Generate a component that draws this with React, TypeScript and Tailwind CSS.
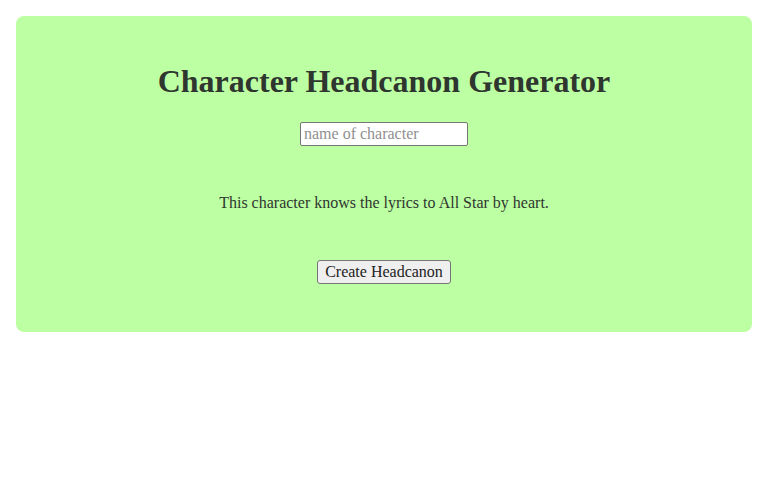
import React, { useState } from 'react';

const headcanons = [
  'This character knows the lyrics to All Star by heart.',
];

export default function App() {
  const [name, setName] = useState('');
  const [canon] = useState(headcanons[0]);

  return (
    <div className="min-h-screen bg-white p-4 font-['Liberation_Serif',serif] text-[#2f362f]">
      <div className="flex flex-col items-center rounded-lg bg-[#bdffa3] pt-[47px] pb-[48px]">
        <h1 className="text-[32px] font-bold leading-[37px]">Character Headcanon Generator</h1>
        <input
          value={name}
          onChange={e => setName(e.target.value)}
          placeholder="name of character"
          className="mt-[22px] h-6 w-[168px] rounded-[2px] border border-[#767676] bg-white px-[3px] text-base leading-[22px] text-black placeholder:text-[#8f8f8f] outline-none"
        />
        <p className="mt-[48px] text-base leading-[18px]">{canon}</p>
        <button className="mt-[48px] h-6 rounded-[3px] border border-[#767676] bg-[#efefef] px-[7px] text-base leading-[22px] text-[#222]">
          Create Headcanon
        </button>
      </div>
    </div>
  );
}
